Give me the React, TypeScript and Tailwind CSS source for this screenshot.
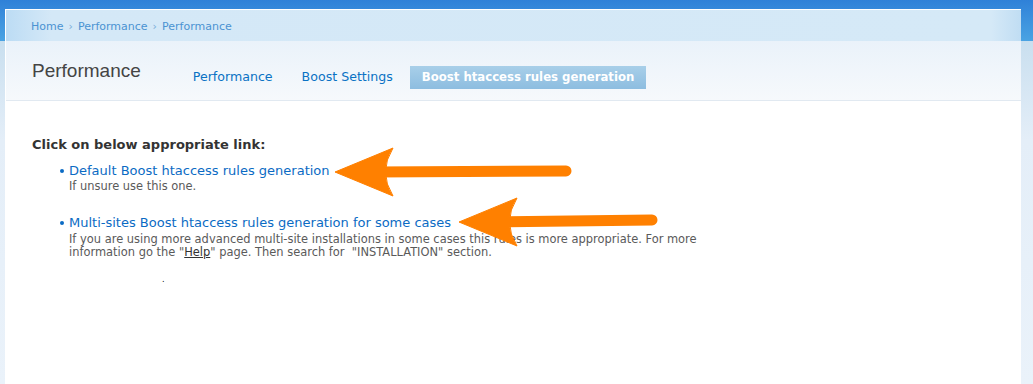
import React from "react";

const sans = { fontFamily: '"DejaVu Sans", Verdana, sans-serif' };

function Arrow({ tip, barbX, barbDy, end, notchX }: { tip: [number, number]; barbX: number; barbDy: number; end: [number, number]; notchX: number }) {
  const [tx, ty] = tip;
  return (
    <g fill="#ff8000" stroke="#ff8000">
      <line x1={notchX - 4} y1={ty} x2={end[0]} y2={end[1]} strokeWidth={11} strokeLinecap="round" />
      <path
        d={`M${tx} ${ty} L${barbX} ${ty - barbDy} Q${notchX} ${ty} ${barbX} ${ty + barbDy} Z`}
        strokeWidth={1}
        strokeLinejoin="round"
      />
    </g>
  );
}

export default function App() {
  return (
    <div
      className="relative h-[384px] w-full overflow-hidden bg-[linear-gradient(to_bottom,#2f81d8_0px,#4aa3e3_41px,#c9dfef_41px,#e4eef8_140px,#eaf2fa_384px)]"
      style={sans}
    >
      <div className="ml-[5px] mr-[12px] mt-[9px] flex h-[375px] flex-col border-l border-t border-white bg-white">
        {/* breadcrumb */}
        <div className="flex h-[31px] items-center bg-[linear-gradient(to_right,#bcdcf4_0px,#d4e8f7_45px,#d5e9f7_calc(100%-30px),#c0ddf3_100%)] pl-[25px] pt-[3px] text-[11px] text-[#4b93d2]">
          <span>Home</span>
          <span className="mx-[5px] text-[#7aaed8]">›</span>
          <span>Performance</span>
          <span className="mx-[5px] text-[#7aaed8]">›</span>
          <span>Performance</span>
        </div>

        {/* title + tabs */}
        <div className="flex h-[60px] items-center border-b border-[#e1e9f1] bg-[linear-gradient(to_bottom,#eaf2fa,#f6f9fc)] pl-[26px]">
          <h1
            className="mt-[1px] text-[19px] text-[#444]"
            style={{ fontFamily: '"Liberation Sans", Arial, sans-serif' }}
          >
            Performance
          </h1>
          <div className="ml-[52px] mt-[13px] flex items-center text-[12.6px] text-[#0a72c4]">
            <span>Performance</span>
            <span className="ml-[29px]">Boost Settings</span>
            <span
              className="ml-[17px] flex h-[23px] items-center bg-[linear-gradient(to_bottom,#a8cfe9,#8dbde0)] px-[12px] text-[13px] font-bold text-white"
              style={{ fontFamily: '"DejaVu Sans Condensed", "DejaVu Sans", sans-serif' }}
            >
              Boost htaccess rules generation
            </span>
          </div>
        </div>

        {/* content */}
        <div className="flex-1 bg-white pl-[26px] pt-[35px]">
          <div className="text-[13px] font-bold leading-[18px] text-[#333]">Click on below appropriate link:</div>

          <div className="mt-[9px] pl-[28px]">
            <div className="flex items-center leading-[16px]">
              <span className="mr-[5px] h-[4px] w-[4px] rounded-full bg-[#0b6bc4]" />
              <span className="text-[13px] text-[#0b6bc4]">Default Boost htaccess rules generation</span>
            </div>
            <div className="pl-[9px] text-[11.45px] leading-[14px] text-[#5a5a5a]">If unsure use this one.</div>
          </div>

          <div className="mt-[22px] pl-[28px]">
            <div className="flex items-center leading-[16px]">
              <span className="mr-[5px] h-[4px] w-[4px] rounded-full bg-[#0b6bc4]" />
              <span className="text-[13px] text-[#0b6bc4]">Multi-sites Boost htaccess rules generation for some cases</span>
            </div>
            <div className="w-[660px] pl-[9px] pt-[2px] text-[11.45px] leading-[13px] text-[#5a5a5a]">
              If you are using more advanced multi-site installations in some cases this rules is more appropriate. For more
              information go the "<span className="text-[#333] underline">Help</span>" page. Then search for &nbsp;"INSTALLATION" section.
            </div>
          </div>

          <div className="mt-[17px] pl-[130px] text-[8px] leading-[8px] text-black">.</div>
        </div>
      </div>

      <svg className="pointer-events-none absolute inset-0" width={1033} height={384} viewBox="0 0 1033 384">
        <Arrow tip={[335, 172]} barbX={393} barbDy={24} end={[566, 171]} notchX={378} />
        <Arrow tip={[459, 222]} barbX={517} barbDy={24} end={[652, 220]} notchX={502} />
      </svg>
    </div>
  );
}
